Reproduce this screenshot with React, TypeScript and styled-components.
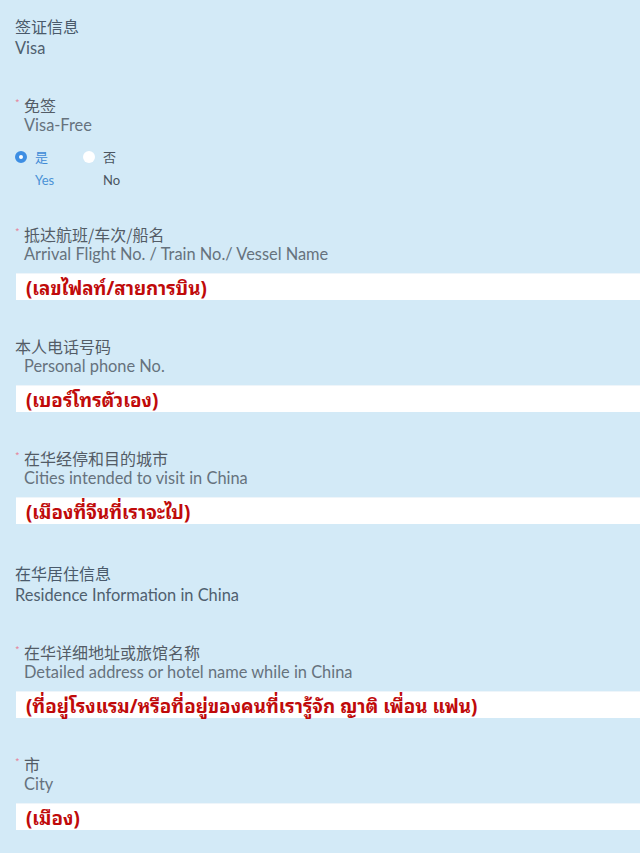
import type { FC } from 'react';
import styled, { createGlobalStyle } from 'styled-components';

const GlobalStyle = createGlobalStyle`
  html, body {
    margin: 0;
    padding: 0;
    background: #d3eaf7;
  }
  body {
    font-family: Lato, "Noto Sans CJK SC", sans-serif;
  }
`;

const Page = styled.div`
  width: 640px;
  height: 853px;
  overflow: hidden;
  background: #d3eaf7;
  padding-top: 15px;
  display: flex;
  flex-direction: column;
  gap: 35px;
  box-sizing: border-box;
`;

const Section = styled.div<{ $offset?: number }>`
  display: flex;
  flex-direction: column;
  padding-left: 15px;
  margin-top: ${({ $offset }) => $offset ?? 0}px;
`;

const SectionTitle = styled.div`
  font-family: "Noto Sans CJK SC", sans-serif;
  font-size: 16px;
  line-height: 22px;
  color: #4a5a6b;
`;

const SectionSub = styled.div`
  font-family: Lato, sans-serif;
  font-size: 16.4px;
  line-height: 22px;
  color: #4f5f6f;
`;

const Field = styled.div`
  display: flex;
  flex-direction: column;
`;

const Label = styled.div`
  display: flex;
  align-items: center;
  padding-left: 15px;
  font-family: "Noto Sans CJK SC", sans-serif;
  font-size: 16px;
  line-height: 22px;
  color: #535c66;
`;

const Star = styled.span`
  width: 9px;
  font-size: 10px;
  line-height: 10px;
  margin-top: -4px;
  color: #e58aa0;
`;

const SubLabel = styled.div`
  padding-left: 24px;
  font-family: Lato, sans-serif;
  font-size: 16.4px;
  line-height: 18px;
  color: #66727d;
`;

const InputBox = styled.div`
  margin-top: 10px;
  margin-left: 16px;
  height: 27px;
  background: #ffffff;
  border-top: 1px solid #eef5fa;
  box-sizing: border-box;
  display: flex;
  align-items: center;
  padding-left: 10px;
  white-space: nowrap;
`;

const ThaiNote = styled.span`
  font-family: "Noto Sans Thai Looped", "Noto Sans Thai", Loma, Garuda, "Noto Sans", "DejaVu Sans", sans-serif;
  font-weight: 700;
  font-size: 18.8px;
  line-height: 26px;
  color: #c00a0a;
`;

const RadioRow = styled.div`
  display: flex;
  margin-top: 13px;
  margin-bottom: -2px;
  padding-left: 15px;
`;

const RadioOption = styled.div<{ $width: number }>`
  width: ${({ $width }) => $width}px;
  display: grid;
  grid-template-columns: 20px auto;
  align-items: center;
`;

const RadioDot = styled.span<{ $checked: boolean }>`
  width: 12px;
  height: 12px;
  border-radius: 50%;
  box-sizing: border-box;
  background: #ffffff;
  border: ${({ $checked }) => ($checked ? '4px solid #3d8ee3' : 'none')};
`;

const RadioCn = styled.span<{ $checked: boolean }>`
  font-family: "Noto Sans CJK SC", sans-serif;
  font-size: 13px;
  line-height: 20px;
  color: ${({ $checked }) => ($checked ? '#3f8bd6' : '#4a5560')};
`;

const RadioEn = styled.span<{ $checked: boolean }>`
  grid-column: 2;
  margin-top: 3px;
  font-family: Lato, sans-serif;
  font-size: 13px;
  line-height: 20px;
  color: ${({ $checked }) => ($checked ? '#4a92d6' : '#4a5560')};
`;

interface TextFieldProps {
  cn: string;
  en: string;
  note: string;
  required?: boolean;
}

const TextField: FC<TextFieldProps> = ({ cn, en, note, required = true }) => (
  <Field>
    <Label>
      {required && <Star>*</Star>}
      {cn}
    </Label>
    <SubLabel>{en}</SubLabel>
    <InputBox>
      <ThaiNote>{note}</ThaiNote>
    </InputBox>
  </Field>
);

export default function App() {
  return (
    <>
      <GlobalStyle />
      <Page>
        <Section>
          <SectionTitle>签证信息</SectionTitle>
          <SectionSub>Visa</SectionSub>
        </Section>

        <Field>
          <Label>
            <Star>*</Star>
            免签
          </Label>
          <SubLabel>Visa-Free</SubLabel>
          <RadioRow>
            <RadioOption $width={68}>
              <RadioDot $checked />
              <RadioCn $checked>是</RadioCn>
              <RadioEn $checked>Yes</RadioEn>
            </RadioOption>
            <RadioOption $width={80}>
              <RadioDot $checked={false} />
              <RadioCn $checked={false}>否</RadioCn>
              <RadioEn $checked={false}>No</RadioEn>
            </RadioOption>
          </RadioRow>
        </Field>

        <TextField
          cn="抵达航班/车次/船名"
          en="Arrival Flight No. / Train No./ Vessel Name"
          note="(เลขไฟลท์/สายการบิน)"
        />
        <TextField
          cn="本人电话号码"
          en="Personal phone No."
          note="(เบอร์โทรตัวเอง)"
          required={false}
        />
        <TextField
          cn="在华经停和目的城市"
          en="Cities intended to visit in China"
          note="(เมืองที่จีนที่เราจะไป)"
        />

        <Section $offset={3}>
          <SectionTitle>在华居住信息</SectionTitle>
          <SectionSub>Residence Information in China</SectionSub>
        </Section>

        <TextField
          cn="在华详细地址或旅馆名称"
          en="Detailed address or hotel name while in China"
          note="(ที่อยู่โรงแรม/หรือที่อยู่ของคนที่เรารู้จัก ญาติ เพื่อน แฟน)"
        />
        <TextField cn="市" en="City" note="(เมือง)" />
      </Page>
    </>
  );
}
